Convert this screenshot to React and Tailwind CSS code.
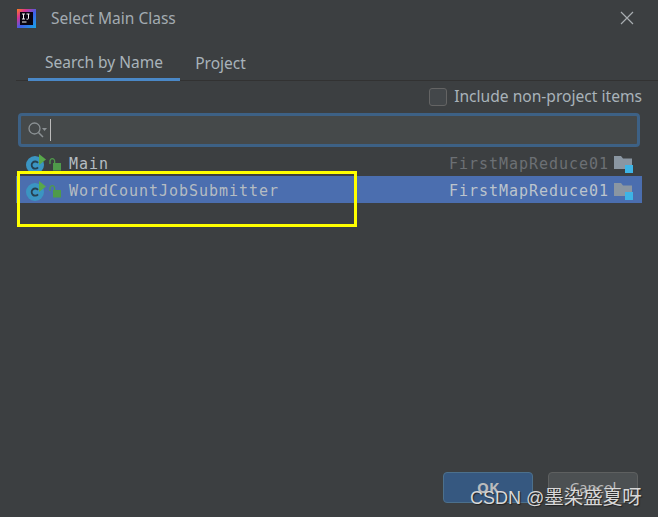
import React from 'react';

const uiFont = { fontFamily: '"Noto Sans", sans-serif' };

const AppLogo = () => (
    <svg width="19" height="19" viewBox="0 0 19 19" className="shrink-0">
        <defs>
            <linearGradient id="ij" x1="0" y1="0" x2="1" y2="1">
                <stop offset="0" stopColor="#fc801d" />
                <stop offset="0.25" stopColor="#d8328f" />
                <stop offset="0.55" stopColor="#3f5fe8" />
                <stop offset="1" stopColor="#17a5e6" />
            </linearGradient>
        </defs>
        <rect width="19" height="19" fill="url(#ij)" />
        <rect x="3" y="3" width="13" height="13" fill="#0a0410" />
        <path d="M5 5h3M6.500 5v5M5 10h3M9.500 5h3M11.500 5v4.500q0 .7-.8.7H9.500M5 13h4.500" stroke="#f2f2f2" strokeWidth="1" fill="none" />
    </svg>
);

const ClassIcon = () => (
    <svg width="21" height="20" viewBox="0 0 21 20" className="shrink-0">
        <circle cx="9" cy="11" r="9" fill="#3b95c2" />
        <path d="M12 8.800a3.600 3.600 0 1 0 0 4.600" stroke="#27404f" strokeWidth="1.800" fill="none" />
        <path d="M13 0l7 5.500-7 5.500z" fill="#59a84a" />
    </svg>
);

const LockIcon = () => (
    <svg width="12" height="13" viewBox="0 0 12 13" className="shrink-0">
        <path d="M1 6V3a2.300 2.300 0 0 1 4.600 0v2" stroke="#4f9a4a" strokeWidth="1.300" fill="none" />
        <rect x="4" y="5" width="8" height="7.500" fill="#4f9a4a" />
    </svg>
);

const FolderIcon = () => (
    <svg width="20" height="18" viewBox="0 0 20 18" className="shrink-0">
        <path d="M0 1h7l2 2.500h9V14H0z" fill="#8a96a2" />
        <rect x="11" y="10" width="8" height="8" fill="#3db4e6" />
    </svg>
);

const ResultRow = ({ name, selected }) => (
    <div className={`flex h-[27px] items-center pl-[10px] pr-[8px] pt-[3px] ${selected ? 'bg-[#4b6eaf]' : ''}`}>
        <ClassIcon />
        <div className="ml-[2px] mr-[8px]"><LockIcon /></div>
        <span className="text-[15px] tracking-[0.97px] text-[#b5bcc2] [font-family:'DejaVu_Sans_Mono',monospace]">{name}</span>
        <span className={`ml-auto text-[15px] tracking-[0.97px] [font-family:'DejaVu_Sans_Mono',monospace] ${selected ? 'text-[#bcc4cc]' : 'text-[#6c7074]'}`}>FirstMapReduce01</span>
        <div className="ml-[5px]"><FolderIcon /></div>
    </div>
);

const App = () => (
    <div className="relative flex h-[517px] w-[658px] flex-col overflow-hidden bg-[#3c3f41]" style={uiFont}>
        {/* title bar */}
        <div className="flex h-[37px] items-center pl-[17px] pr-[24px]">
            <AppLogo />
            <span className="ml-[15px] text-[15.500px] text-[#a3abb1]">Select Main Class</span>
            <svg width="14" height="14" viewBox="0 0 14 14" className="ml-auto -mt-[1px]">
                <path d="M1 1l12 12M13 1L1 13" stroke="#a8adb0" strokeWidth="1.200" />
            </svg>
        </div>

        {/* tabs */}
        <div className="ml-[16px] mt-[8px] flex h-[36px] border-b border-[#323232]">
            <div className="ml-[12px] -mb-px flex w-[152px] items-center justify-center border-b-[3px] border-[#4a88c7] pt-[2px] text-[15.500px] text-[#a9b3ba]">Search by Name</div>
            <div className="flex w-[81px] items-center justify-center pt-[2px] text-[15.500px] text-[#a9b3ba]">Project</div>
        </div>

        {/* include checkbox */}
        <div className="mt-[4px] flex items-center justify-end pr-[16px]">
            <div className="h-[18px] w-[18px] rounded-[3px] border border-[#646464] bg-[#43474a]" />
            <span className="ml-[7px] text-[15.600px] text-[#a9b3ba]">Include non-project items</span>
        </div>

        {/* search field */}
        <div className="ml-[18px] mt-[5px] flex h-[34px] w-[622px] items-center rounded-[4px] border-[3px] border-[#3d6185] bg-[#45494a] pl-[6px]">
            <svg width="22" height="18" viewBox="0 0 22 18" className="shrink-0">
                <circle cx="7.500" cy="7.500" r="5.500" stroke="#8b9194" strokeWidth="1.300" fill="none" />
                <path d="M11.500 11.500l4.500 4.500" stroke="#8b9194" strokeWidth="1.500" />
                <path d="M15 7h5l-2.500 3z" fill="#8b9194" />
            </svg>
            <div className="ml-[1px] h-[22px] w-px bg-[#bbbbbb]" />
        </div>

        {/* results */}
        <div className="ml-[16px] mt-[2px] w-[626px]">
            <ResultRow name="Main" />
            <ResultRow name="WordCountJobSubmitter" selected />
        </div>

        {/* footer buttons */}
        <div className="mt-auto flex justify-end gap-[15px] pb-[14px] pr-[20px]">
            <div className="flex h-[31px] w-[90px] items-center justify-center rounded-[4px] border border-[#4c708c] bg-[#365880] text-[15px] font-bold text-[#bbbbbb]">OK</div>
            <div className="flex h-[31px] w-[90px] items-center justify-center rounded-[4px] border border-[#5e6060] bg-[#4c5052] text-[15px] text-[#bbbbbb]">Cancel</div>
        </div>

        {/* annotation drawn over the screenshot */}
        <div className="absolute left-[17px] top-[171px] h-[56px] w-[340px] border-[3px] border-[#ffff00]" />

        {/* watermark */}
        <div className="absolute left-[470px] top-[485px] whitespace-nowrap text-[18px] leading-[24px] text-[#d8d8d8] [font-family:'Liberation_Sans','Noto_Sans_CJK_SC',sans-serif] [text-shadow:1px_1px_1px_#222]">CSDN @<span className="text-[19.500px]">墨染盛夏呀</span></div>
    </div>
);

export default App;
